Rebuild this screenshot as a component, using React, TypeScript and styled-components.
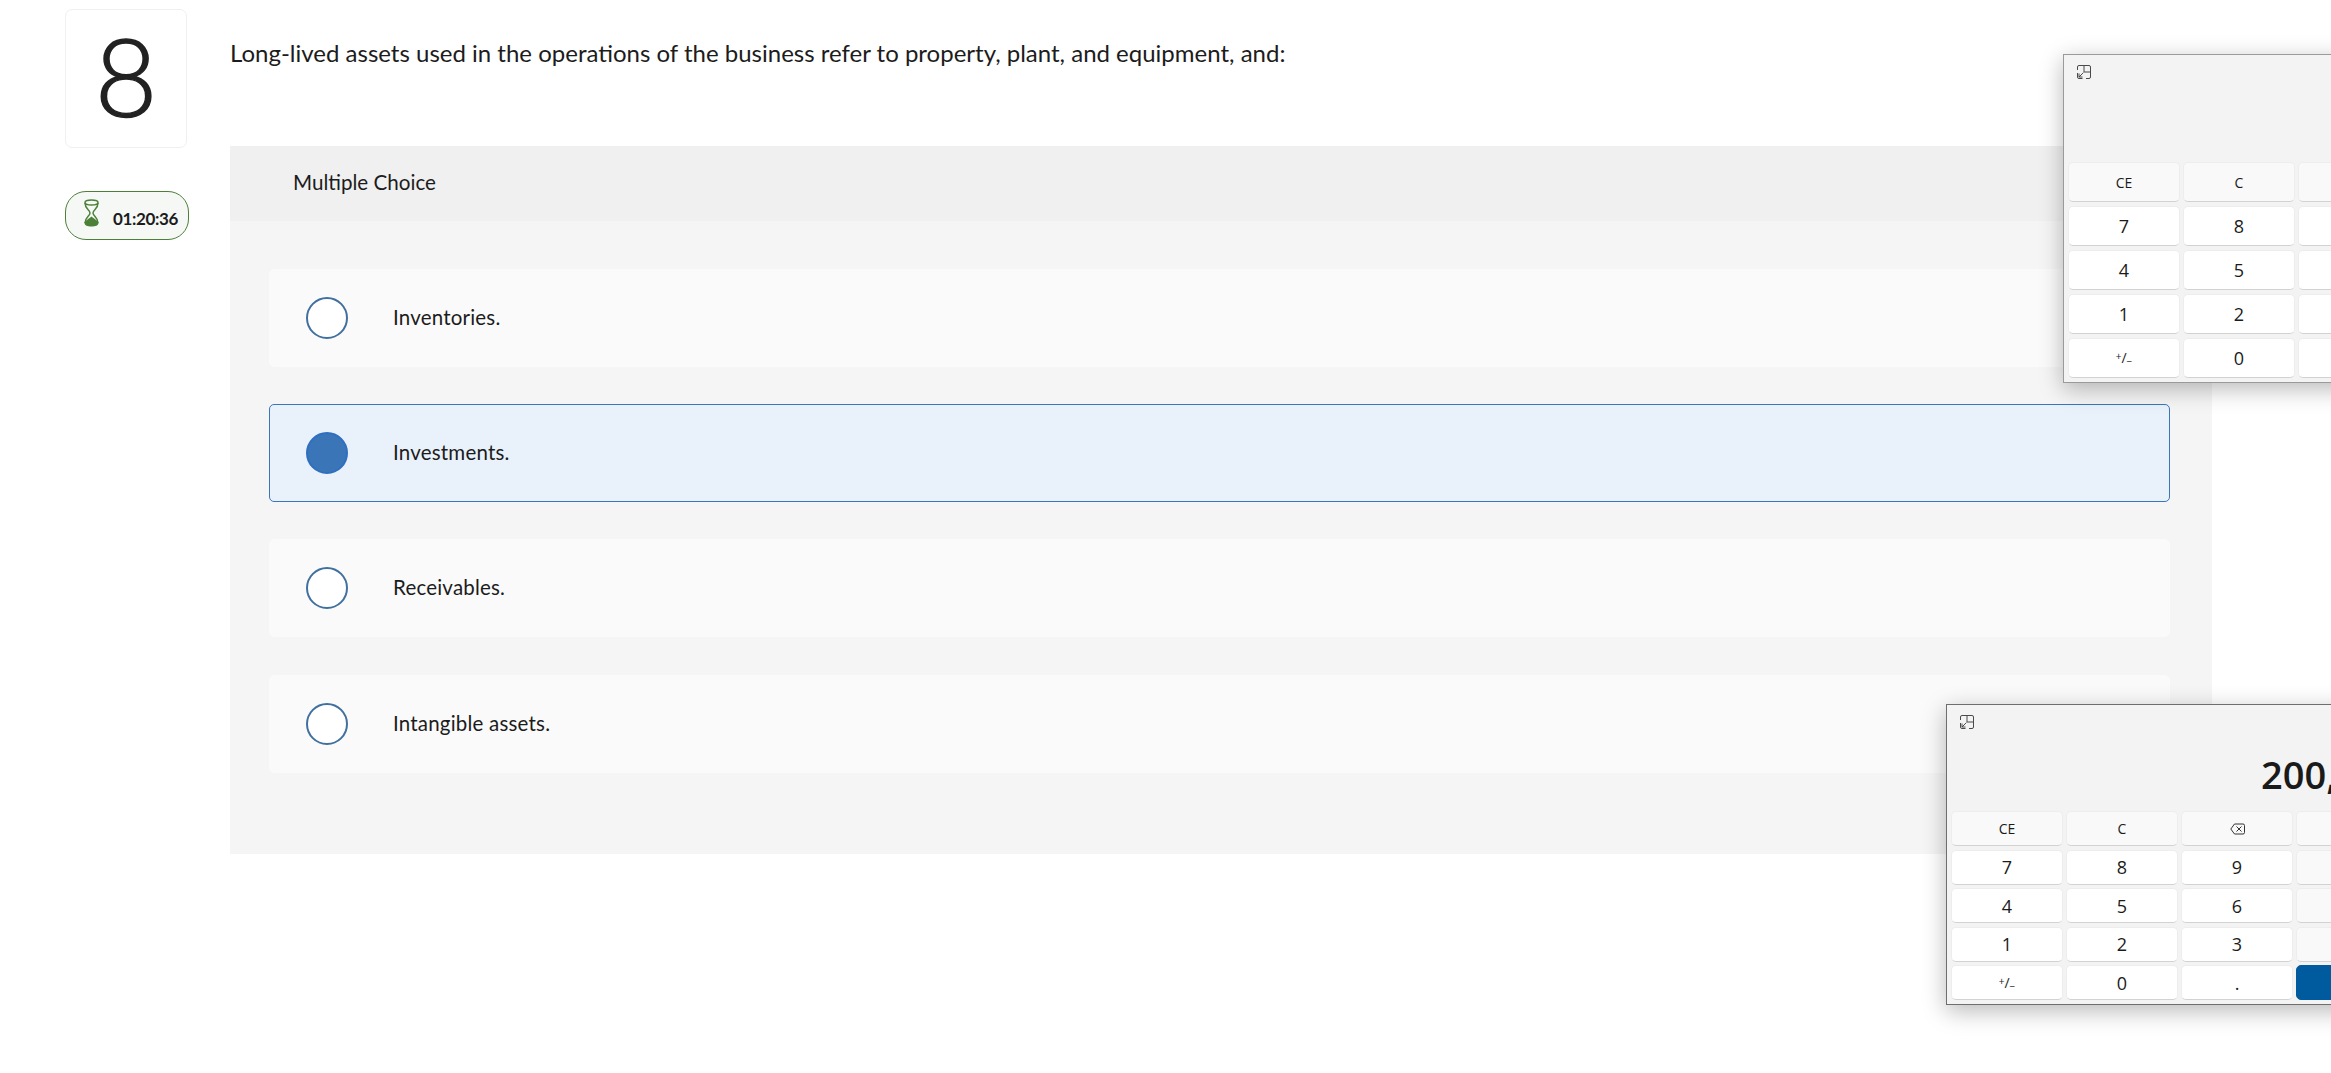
import React from "react";
import styled, { createGlobalStyle } from "styled-components";

const GlobalStyle = createGlobalStyle`
  html, body { margin: 0; padding: 0; background: #fff; overflow: hidden; }
  * { box-sizing: border-box; }
`;

const PROXIMA = `"Lato", "Open Sans", sans-serif`;
const SEGOE = `"Open Sans", "Noto Sans", sans-serif`;

const Page = styled.div`
  position: relative;
  width: 2331px;
  height: 1073px;
  overflow: hidden;
  display: flex;
  align-items: flex-start;
  padding: 9px 0 0 65px;
  font-family: ${PROXIMA};
  color: #1c1c1c;
`;

const Side = styled.aside`
  width: 124px;
  margin-right: 41px;
  display: flex;
  flex-direction: column;
  gap: 43px;
`;

const NumberCard = styled.div`
  width: 122px;
  height: 139px;
  border: 1px solid #f0f0f0;
  border-radius: 7px;
  display: flex;
  align-items: center;
  justify-content: center;
  padding-bottom: 8px;
  font-size: 108px;
  font-weight: 300;
  line-height: 1;
  color: #222;
  -webkit-text-stroke: 1.4px #222;
`;

const Timer = styled.div`
  width: 124px;
  height: 49px;
  border: 1px solid #4c8038;
  border-radius: 21px;
  background: #f6f8f6;
  display: flex;
  align-items: center;
  padding: 0 0 0 17px;
  gap: 13px;
`;

const TimerText = styled.span`
  font-size: 17px;
  font-weight: 700;
  margin-top: 5px;
  letter-spacing: -0.35px;
`;

const Main = styled.main`
  width: 1982px;
  display: flex;
  flex-direction: column;
`;

const Question = styled.p`
  margin: 0;
  height: 137px;
  padding-top: 28px;
  font-size: 24px;
  line-height: 32px;
`;

const Panel = styled.section`
  height: 708px;
  background: #f5f5f5;
  border-radius: 4px 4px 0 0;
`;

const PanelHeader = styled.header`
  height: 75px;
  background: #f0f0f0;
  display: flex;
  align-items: center;
  padding: 0 0 3px 63px;
  font-size: 20.6px;
`;

const Options = styled.div`
  padding: 48px 0 0 39px;
  display: flex;
  flex-direction: column;
  gap: 37.2px;
`;

const Option = styled.div<{ $selected?: boolean }>`
  width: 1901px;
  height: 98px;
  border-radius: 5px;
  display: flex;
  align-items: center;
  padding-left: 36px;
  gap: 45px;
  background: ${(p) => (p.$selected ? "#e9f1fb" : "#fafafa")};
  border: 1.5px solid ${(p) => (p.$selected ? "#3a76bb" : "#fafafa")};
`;

const AnswerText = styled.span`
  font-size: 20.5px;
  letter-spacing: 0.2px;
  margin-bottom: 2px;
`;

const Radio = styled.span<{ $selected?: boolean }>`
  flex: none;
  width: 42px;
  height: 42px;
  border-radius: 50%;
  border: 2px solid ${(p) => (p.$selected ? "#2f6fc0" : "#41709f")};
  background: ${(p) => (p.$selected ? "#3a75b8" : "#fff")};
`;

const CalcWindow = styled.div<{ $left: number; $top: number; $dark?: boolean }>`
  position: absolute;
  left: ${(p) => p.$left}px;
  top: ${(p) => p.$top}px;
  width: 468px;
  background: #f3f3f3;
  border: 1px solid ${(p) => (p.$dark ? "#6e6e6e" : "#9a9a9a")};
  box-shadow: 0 6px 22px rgba(0, 0, 0, 0.28);
  font-family: ${SEGOE};
  color: #1b1b1b;
  padding: 0 4px 4px 4px;
`;

const CalcHead = styled.div<{ $height: number }>`
  height: ${(p) => p.$height}px;
  padding-top: 10px;
  display: flex;
  flex-direction: column;
`;

const CompactIcon = styled.svg`
  width: 14px;
  height: 14px;
  margin-left: 9px;
  flex: none;
`;

const CalcValue = styled.div`
  margin: 20px 0 0 310px;
  font-size: 38px;
  font-weight: 600;
  line-height: 50px;
  color: #1a1a1a;
`;

const Keys = styled.div<{ $rowHeight: number; $gap: number }>`
  display: grid;
  grid-template-columns: repeat(4, 112px);
  grid-auto-rows: ${(p) => p.$rowHeight}px;
  column-gap: 3px;
  row-gap: ${(p) => p.$gap}px;
`;

const Key = styled.div<{ $tone?: "top" | "accent"; $small?: boolean }>`
  display: flex;
  align-items: center;
  justify-content: center;
  border-radius: 5px;
  border: 1px solid ${(p) => (p.$tone === "accent" ? "#005a9e" : "#ededed")};
  border-bottom-color: ${(p) => (p.$tone === "accent" ? "#005a9e" : "#d2d2d2")};
  background: ${(p) =>
    p.$tone === "accent" ? "#005a9e" : p.$tone === "top" ? "#f9f9f9" : "#fff"};
  color: ${(p) => (p.$tone === "accent" ? "#fff" : "#1b1b1b")};
  font-size: ${(p) => (p.$small ? 14 : 18)}px;
`;

const Raised = styled.span`
  font-size: 10px;
  vertical-align: 3px;
`;

const Lowered = styled.span`
  font-size: 10px;
  vertical-align: -2px;
`;

const BackspaceIcon = styled.svg`
  width: 15px;
  height: 12px;
`;

const HourglassIcon = styled.svg`
  width: 17px;
  height: 28px;
  flex: none;
  margin-top: -5px;
`;

const Compact = () => (
  <CompactIcon viewBox="0 0 14 14" fill="none" stroke="#4a4a4a" strokeWidth="1">
    <path d="M.5 5V2A1.500 1.500 0 0 1 2 .5h10A1.500 1.500 0 0 1 13.500 2v10a1.500 1.500 0 0 1-1.500 1.500H9" />
    <path d="M7 .5v6.500h6.500" />
    <path d="M.5 8v4A1.500 1.500 0 0 0 2 13.500h3.500" />
    <path d="M6.500 7.500l-4.500 4.500M2 8.500V12h3.500" />
  </CompactIcon>
);

const Backspace = () => (
  <BackspaceIcon viewBox="0 0 15 12" fill="none" stroke="#333" strokeWidth="1">
    <path d="M4.500 1H13a1.500 1.500 0 0 1 1.500 1.500v7A1.500 1.500 0 0 1 13 11H4.500L.8 6z" />
    <path d="M6.500 3.500l5 5M11.500 3.500l-5 5" />
  </BackspaceIcon>
);

const Hourglass = () => (
  <HourglassIcon viewBox="0 0 17 28" fill="none" stroke="#4c8038" strokeWidth="1.5">
    <ellipse cx="8.5" cy="3.5" rx="6.5" ry="2.5" />
    <path d="M2 4c0 6 5 7 5 10s-5 4-5 10M15 4c0 6-5 7-5 10s5 4 5 10" />
    <path
      d="M1.500 24c0-2 4-4 7-6.500 3 2.500 7 4.500 7 6.500 0 2.500-3 3.500-7 3.500s-7-1-7-3.500z"
      fill="#4c8038"
      stroke="none"
    />
  </HourglassIcon>
);

type KeyDef = { label: React.ReactNode; tone?: "top" | "accent"; small?: boolean };

const keys: KeyDef[] = [
  { label: "CE", tone: "top", small: true },
  { label: "C", tone: "top", small: true },
  { label: <Backspace />, tone: "top" },
  { label: "÷", tone: "top" },
  { label: "7" },
  { label: "8" },
  { label: "9" },
  { label: "×", tone: "top" },
  { label: "4" },
  { label: "5" },
  { label: "6" },
  { label: "−", tone: "top" },
  { label: "1" },
  { label: "2" },
  { label: "3" },
  { label: "+", tone: "top" },
  {
    label: (
      <span>
        <Raised>+</Raised>/<Lowered>−</Lowered>
      </span>
    ),
    small: true,
  },
  { label: "0" },
  { label: "." },
  { label: "=", tone: "accent" },
];

const Calculator = ({
  left,
  top,
  headHeight,
  rowHeight,
  gap,
  value,
  dark,
  accent,
  labelledColumns,
}: {
  left: number;
  top: number;
  headHeight: number;
  rowHeight: number;
  gap: number;
  value?: string;
  dark?: boolean;
  accent?: boolean;
  labelledColumns: number;
}) => (
  <CalcWindow $left={left} $top={top} $dark={dark}>
    <CalcHead $height={headHeight}>
      <Compact />
      {value && <CalcValue>{value}</CalcValue>}
    </CalcHead>
    <Keys $rowHeight={rowHeight} $gap={gap}>
      {keys.map((k, i) => (
        <Key key={i} $tone={k.tone === "accent" && !accent ? undefined : k.tone} $small={k.small}>
          {i % 4 < labelledColumns ? k.label : null}
        </Key>
      ))}
    </Keys>
  </CalcWindow>
);

const answers = ["Inventories.", "Investments.", "Receivables.", "Intangible assets."];

export default function App() {
  return (
    <Page>
      <GlobalStyle />
      <Side>
        <NumberCard>8</NumberCard>
        <Timer>
          <Hourglass />
          <TimerText>01:20:36</TimerText>
        </Timer>
      </Side>
      <Main>
        <Question>
          Long-lived assets used in the operations of the business refer to property, plant, and
          equipment, and:
        </Question>
        <Panel>
          <PanelHeader>Multiple Choice</PanelHeader>
          <Options>
            {answers.map((a, i) => (
              <Option key={a} $selected={i === 1}>
                <Radio $selected={i === 1} />
                <AnswerText>{a}</AnswerText>
              </Option>
            ))}
          </Options>
        </Panel>
      </Main>
      <Calculator left={2063} top={54} headHeight={107} rowHeight={40} gap={4} labelledColumns={2} />
      <Calculator
        left={1946}
        top={704}
        headHeight={106}
        rowHeight={35}
        gap={3.6}
        value="200,"
        dark
        accent
        labelledColumns={3}
      />
    </Page>
  );
}
